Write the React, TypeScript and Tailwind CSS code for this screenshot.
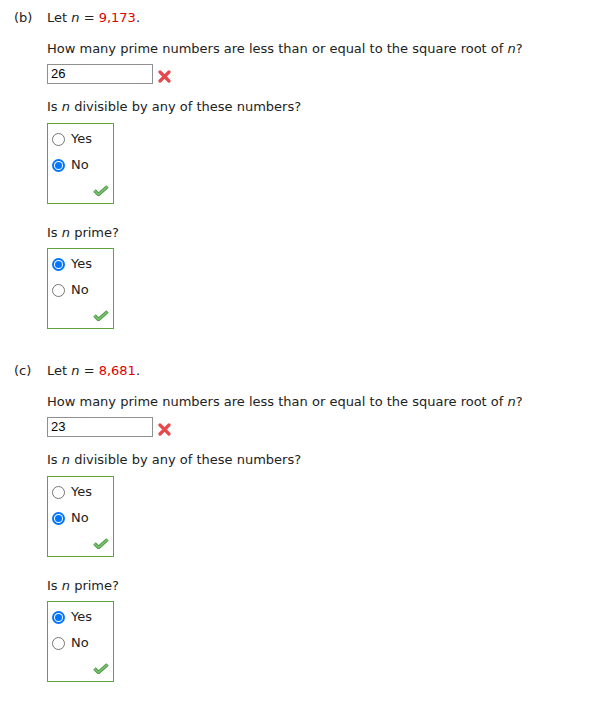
import React from "react";

type Part = {
  label: string;
  n: string;
  answer: string;
};

const parts: Part[] = [
  { label: "(b)", n: "9,173", answer: "26" },
  { label: "(c)", n: "8,681", answer: "23" },
];

function Cross() {
  return (
    <svg width="13" height="13" viewBox="0 0 13 13" className="ml-[5px] mt-[6px]">
      <path d="M2 2 L11 11 M11 2 L2 11" stroke="#e5484d" strokeWidth="3.2" strokeLinecap="round" />
    </svg>
  );
}

function Check() {
  return (
    <svg width="16" height="11" viewBox="0 0 16 11">
      <path d="M1.5 5.5 L5.5 9.5 L14.5 1.5" fill="none" stroke="#4f9a4a" strokeWidth="3.6" strokeLinejoin="round" />
      <path d="M1.5 5.5 L5.5 9.5 L14.5 1.5" fill="none" stroke="#7cc46f" strokeWidth="1.6" strokeLinejoin="round" />
    </svg>
  );
}

function Radio({ checked }: { checked: boolean }) {
  return checked ? (
    <span className="flex h-[13px] w-[13px] items-center justify-center rounded-full bg-[#0075ff]">
      <span className="flex h-[9px] w-[9px] items-center justify-center rounded-full bg-white">
        <span className="h-[7px] w-[7px] rounded-full bg-[#0075ff]" />
      </span>
    </span>
  ) : (
    <span className="h-[13px] w-[13px] rounded-full border border-[#767676] bg-white" />
  );
}

function Choice({ yes }: { yes: boolean }) {
  return (
    <div className="flex w-[67px] flex-col border border-[#63a33f] pl-[4px] pr-[4px] pt-[2px]">
      {["Yes", "No"].map((opt) => (
        <div key={opt} className="flex h-[26px] items-center gap-[6px]">
          <Radio checked={(opt === "Yes") === yes} />
          <span>{opt}</span>
        </div>
      ))}
      <div className="flex h-[25px] items-start justify-end pt-[7px]">
        <Check />
      </div>
    </div>
  );
}

function Section({ part }: { part: Part }) {
  return (
    <div className="flex">
      <div className="w-[33px]">{part.label}</div>
      <div className="flex flex-col">
        <div>
          Let <i>n</i> = <span className="text-[#e00000]">{part.n}</span>.
        </div>
        <div className="mt-[11px]">
          How many prime numbers are less than or equal to the square root of <i>n</i>?
        </div>
        <div className="mt-[5px] flex items-start">
          <div className="flex h-[20px] w-[106px] items-center border border-[#8f8f8f] px-[3px] font-['Liberation_Sans',Arial,sans-serif] text-[13px] text-black">
            {part.answer}
          </div>
          <Cross />
        </div>
        <div className="mt-[13px]">
          Is <i>n</i> divisible by any of these numbers?
        </div>
        <div className="mt-[6px]">
          <Choice yes={false} />
        </div>
        <div className="mt-[19px]">
          Is <i>n</i> prime?
        </div>
        <div className="mt-[5px]">
          <Choice yes={true} />
        </div>
      </div>
    </div>
  );
}

export default function App() {
  return (
    <div className="min-h-[706px] bg-white pl-[14px] pt-[8px] font-['Verdana','DejaVu_Sans',sans-serif] text-[13px] leading-[20px] text-[#222]">
      <div className="flex flex-col gap-[32px]">
        {parts.map((p) => (
          <Section key={p.label} part={p} />
        ))}
      </div>
    </div>
  );
}
